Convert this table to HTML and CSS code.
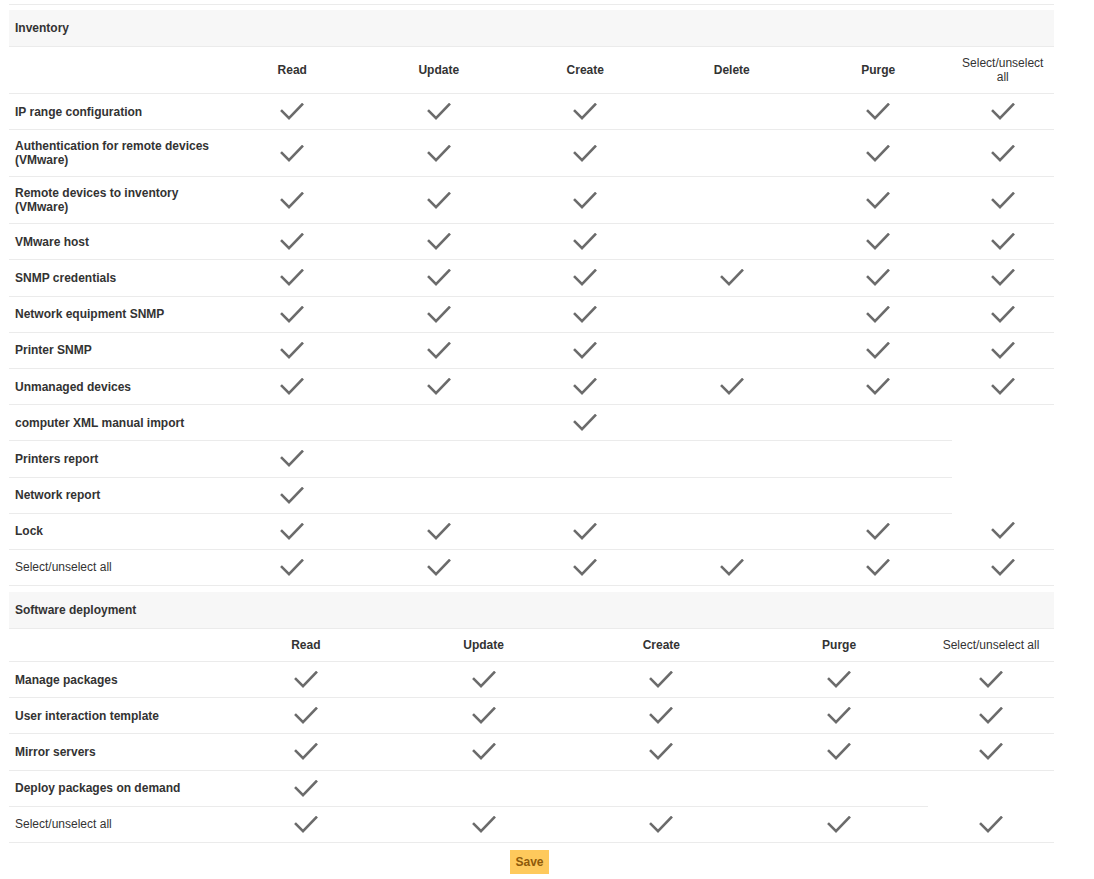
FILE: index.html
```html
<!DOCTYPE html>
<html>
<head>
<meta charset="utf-8">
<link rel="stylesheet" href="styles.css">
</head>
<body>
<div class="page">
  <div class="prev-end"></div>

  <table class="rights inv">
    <colgroup>
      <col class="c-label-inv"><col class="c-inv"><col class="c-inv"><col class="c-inv"><col class="c-inv"><col class="c-inv"><col>
    </colgroup>
    <tr class="section"><th colspan="7">Inventory</th></tr>
    <tr class="heads">
      <th></th><th>Read</th><th>Update</th><th>Create</th><th>Delete</th><th>Purge</th><th class="all">Select/unselect all</th>
    </tr>
    <tr><td class="label">IP range configuration</td><td class="ck"><svg class="check" viewBox="0 0 24 17"><polyline points="1,7 9,15 23,0.5"/></svg></td><td class="ck"><svg class="check" viewBox="0 0 24 17"><polyline points="1,7 9,15 23,0.5"/></svg></td><td class="ck"><svg class="check" viewBox="0 0 24 17"><polyline points="1,7 9,15 23,0.5"/></svg></td><td class="ck"></td><td class="ck"><svg class="check" viewBox="0 0 24 17"><polyline points="1,7 9,15 23,0.5"/></svg></td><td class="ck"><svg class="check" viewBox="0 0 24 17"><polyline points="1,7 9,15 23,0.5"/></svg></td></tr>
    <tr><td class="label">Authentication for remote devices (VMware)</td><td class="ck"><svg class="check" viewBox="0 0 24 17"><polyline points="1,7 9,15 23,0.5"/></svg></td><td class="ck"><svg class="check" viewBox="0 0 24 17"><polyline points="1,7 9,15 23,0.5"/></svg></td><td class="ck"><svg class="check" viewBox="0 0 24 17"><polyline points="1,7 9,15 23,0.5"/></svg></td><td class="ck"></td><td class="ck"><svg class="check" viewBox="0 0 24 17"><polyline points="1,7 9,15 23,0.5"/></svg></td><td class="ck"><svg class="check" viewBox="0 0 24 17"><polyline points="1,7 9,15 23,0.5"/></svg></td></tr>
    <tr><td class="label">Remote devices to inventory (VMware)</td><td class="ck"><svg class="check" viewBox="0 0 24 17"><polyline points="1,7 9,15 23,0.5"/></svg></td><td class="ck"><svg class="check" viewBox="0 0 24 17"><polyline points="1,7 9,15 23,0.5"/></svg></td><td class="ck"><svg class="check" viewBox="0 0 24 17"><polyline points="1,7 9,15 23,0.5"/></svg></td><td class="ck"></td><td class="ck"><svg class="check" viewBox="0 0 24 17"><polyline points="1,7 9,15 23,0.5"/></svg></td><td class="ck"><svg class="check" viewBox="0 0 24 17"><polyline points="1,7 9,15 23,0.5"/></svg></td></tr>
    <tr><td class="label">VMware host</td><td class="ck"><svg class="check" viewBox="0 0 24 17"><polyline points="1,7 9,15 23,0.5"/></svg></td><td class="ck"><svg class="check" viewBox="0 0 24 17"><polyline points="1,7 9,15 23,0.5"/></svg></td><td class="ck"><svg class="check" viewBox="0 0 24 17"><polyline points="1,7 9,15 23,0.5"/></svg></td><td class="ck"></td><td class="ck"><svg class="check" viewBox="0 0 24 17"><polyline points="1,7 9,15 23,0.5"/></svg></td><td class="ck"><svg class="check" viewBox="0 0 24 17"><polyline points="1,7 9,15 23,0.5"/></svg></td></tr>
    <tr><td class="label">SNMP credentials</td><td class="ck"><svg class="check" viewBox="0 0 24 17"><polyline points="1,7 9,15 23,0.5"/></svg></td><td class="ck"><svg class="check" viewBox="0 0 24 17"><polyline points="1,7 9,15 23,0.5"/></svg></td><td class="ck"><svg class="check" viewBox="0 0 24 17"><polyline points="1,7 9,15 23,0.5"/></svg></td><td class="ck"><svg class="check" viewBox="0 0 24 17"><polyline points="1,7 9,15 23,0.5"/></svg></td><td class="ck"><svg class="check" viewBox="0 0 24 17"><polyline points="1,7 9,15 23,0.5"/></svg></td><td class="ck"><svg class="check" viewBox="0 0 24 17"><polyline points="1,7 9,15 23,0.5"/></svg></td></tr>
    <tr><td class="label">Network equipment SNMP</td><td class="ck"><svg class="check" viewBox="0 0 24 17"><polyline points="1,7 9,15 23,0.5"/></svg></td><td class="ck"><svg class="check" viewBox="0 0 24 17"><polyline points="1,7 9,15 23,0.5"/></svg></td><td class="ck"><svg class="check" viewBox="0 0 24 17"><polyline points="1,7 9,15 23,0.5"/></svg></td><td class="ck"></td><td class="ck"><svg class="check" viewBox="0 0 24 17"><polyline points="1,7 9,15 23,0.5"/></svg></td><td class="ck"><svg class="check" viewBox="0 0 24 17"><polyline points="1,7 9,15 23,0.5"/></svg></td></tr>
    <tr><td class="label">Printer SNMP</td><td class="ck"><svg class="check" viewBox="0 0 24 17"><polyline points="1,7 9,15 23,0.5"/></svg></td><td class="ck"><svg class="check" viewBox="0 0 24 17"><polyline points="1,7 9,15 23,0.5"/></svg></td><td class="ck"><svg class="check" viewBox="0 0 24 17"><polyline points="1,7 9,15 23,0.5"/></svg></td><td class="ck"></td><td class="ck"><svg class="check" viewBox="0 0 24 17"><polyline points="1,7 9,15 23,0.5"/></svg></td><td class="ck"><svg class="check" viewBox="0 0 24 17"><polyline points="1,7 9,15 23,0.5"/></svg></td></tr>
    <tr><td class="label">Unmanaged devices</td><td class="ck"><svg class="check" viewBox="0 0 24 17"><polyline points="1,7 9,15 23,0.5"/></svg></td><td class="ck"><svg class="check" viewBox="0 0 24 17"><polyline points="1,7 9,15 23,0.5"/></svg></td><td class="ck"><svg class="check" viewBox="0 0 24 17"><polyline points="1,7 9,15 23,0.5"/></svg></td><td class="ck"><svg class="check" viewBox="0 0 24 17"><polyline points="1,7 9,15 23,0.5"/></svg></td><td class="ck"><svg class="check" viewBox="0 0 24 17"><polyline points="1,7 9,15 23,0.5"/></svg></td><td class="ck"><svg class="check" viewBox="0 0 24 17"><polyline points="1,7 9,15 23,0.5"/></svg></td></tr>
    <tr><td class="label">computer XML manual import</td><td class="ck"></td><td class="ck"></td><td class="ck"><svg class="check" viewBox="0 0 24 17"><polyline points="1,7 9,15 23,0.5"/></svg></td><td class="ck"></td><td class="ck"></td></tr>
    <tr><td class="label">Printers report</td><td class="ck"><svg class="check" viewBox="0 0 24 17"><polyline points="1,7 9,15 23,0.5"/></svg></td><td class="ck"></td><td class="ck"></td><td class="ck"></td><td class="ck"></td></tr>
    <tr><td class="label">Network report</td><td class="ck"><svg class="check" viewBox="0 0 24 17"><polyline points="1,7 9,15 23,0.5"/></svg></td><td class="ck"></td><td class="ck"></td><td class="ck"></td><td class="ck"></td></tr>
    <tr><td class="label">Lock</td><td class="ck"><svg class="check" viewBox="0 0 24 17"><polyline points="1,7 9,15 23,0.5"/></svg></td><td class="ck"><svg class="check" viewBox="0 0 24 17"><polyline points="1,7 9,15 23,0.5"/></svg></td><td class="ck"><svg class="check" viewBox="0 0 24 17"><polyline points="1,7 9,15 23,0.5"/></svg></td><td class="ck"></td><td class="ck"><svg class="check" viewBox="0 0 24 17"><polyline points="1,7 9,15 23,0.5"/></svg></td><td class="ck"><svg class="check" viewBox="0 0 24 17"><polyline points="1,7 9,15 23,0.5"/></svg></td></tr>
    <tr><td class="label normal">Select/unselect all</td><td class="ck"><svg class="check" viewBox="0 0 24 17"><polyline points="1,7 9,15 23,0.5"/></svg></td><td class="ck"><svg class="check" viewBox="0 0 24 17"><polyline points="1,7 9,15 23,0.5"/></svg></td><td class="ck"><svg class="check" viewBox="0 0 24 17"><polyline points="1,7 9,15 23,0.5"/></svg></td><td class="ck"><svg class="check" viewBox="0 0 24 17"><polyline points="1,7 9,15 23,0.5"/></svg></td><td class="ck"><svg class="check" viewBox="0 0 24 17"><polyline points="1,7 9,15 23,0.5"/></svg></td><td class="ck"><svg class="check" viewBox="0 0 24 17"><polyline points="1,7 9,15 23,0.5"/></svg></td></tr>
  </table>

  <table class="rights soft">
    <colgroup>
      <col class="c-label-soft"><col class="c-soft"><col class="c-soft"><col class="c-soft"><col class="c-soft"><col>
    </colgroup>
    <tr class="section"><th colspan="6">Software deployment</th></tr>
    <tr class="heads">
      <th></th><th>Read</th><th>Update</th><th>Create</th><th>Purge</th><th class="all">Select/unselect all</th>
    </tr>
    <tr><td class="label">Manage packages</td><td class="ck"><svg class="check" viewBox="0 0 24 17"><polyline points="1,7 9,15 23,0.5"/></svg></td><td class="ck"><svg class="check" viewBox="0 0 24 17"><polyline points="1,7 9,15 23,0.5"/></svg></td><td class="ck"><svg class="check" viewBox="0 0 24 17"><polyline points="1,7 9,15 23,0.5"/></svg></td><td class="ck"><svg class="check" viewBox="0 0 24 17"><polyline points="1,7 9,15 23,0.5"/></svg></td><td class="ck"><svg class="check" viewBox="0 0 24 17"><polyline points="1,7 9,15 23,0.5"/></svg></td></tr>
    <tr><td class="label">User interaction template</td><td class="ck"><svg class="check" viewBox="0 0 24 17"><polyline points="1,7 9,15 23,0.5"/></svg></td><td class="ck"><svg class="check" viewBox="0 0 24 17"><polyline points="1,7 9,15 23,0.5"/></svg></td><td class="ck"><svg class="check" viewBox="0 0 24 17"><polyline points="1,7 9,15 23,0.5"/></svg></td><td class="ck"><svg class="check" viewBox="0 0 24 17"><polyline points="1,7 9,15 23,0.5"/></svg></td><td class="ck"><svg class="check" viewBox="0 0 24 17"><polyline points="1,7 9,15 23,0.5"/></svg></td></tr>
    <tr><td class="label">Mirror servers</td><td class="ck"><svg class="check" viewBox="0 0 24 17"><polyline points="1,7 9,15 23,0.5"/></svg></td><td class="ck"><svg class="check" viewBox="0 0 24 17"><polyline points="1,7 9,15 23,0.5"/></svg></td><td class="ck"><svg class="check" viewBox="0 0 24 17"><polyline points="1,7 9,15 23,0.5"/></svg></td><td class="ck"><svg class="check" viewBox="0 0 24 17"><polyline points="1,7 9,15 23,0.5"/></svg></td><td class="ck"><svg class="check" viewBox="0 0 24 17"><polyline points="1,7 9,15 23,0.5"/></svg></td></tr>
    <tr><td class="label">Deploy packages on demand</td><td class="ck"><svg class="check" viewBox="0 0 24 17"><polyline points="1,7 9,15 23,0.5"/></svg></td><td class="ck"></td><td class="ck"></td><td class="ck"></td></tr>
    <tr><td class="label normal">Select/unselect all</td><td class="ck"><svg class="check" viewBox="0 0 24 17"><polyline points="1,7 9,15 23,0.5"/></svg></td><td class="ck"><svg class="check" viewBox="0 0 24 17"><polyline points="1,7 9,15 23,0.5"/></svg></td><td class="ck"><svg class="check" viewBox="0 0 24 17"><polyline points="1,7 9,15 23,0.5"/></svg></td><td class="ck"><svg class="check" viewBox="0 0 24 17"><polyline points="1,7 9,15 23,0.5"/></svg></td><td class="ck"><svg class="check" viewBox="0 0 24 17"><polyline points="1,7 9,15 23,0.5"/></svg></td></tr>
  </table>

  <div class="actions"><button class="save" type="button">Save</button></div>
</div>
</body>
</html>
```

FILE: styles.css
```css
html, body {
  margin: 0;
  padding: 0;
  background: #ffffff;
}

body {
  font-family: "Liberation Sans", Arial, sans-serif;
  font-size: 12px;
  color: #333333;
}

.page {
  width: 1045px;
  padding-left: 9px;
}

.prev-end {
  height: 4px;
  border-bottom: 1px solid #ebebeb;
}

.rights {
  width: 1045px;
  table-layout: fixed;
  border-collapse: collapse;
  border-spacing: 0;
}

.inv {
  margin-top: 5px;
}

.soft {
  margin-top: 6px;
}

.c-label-inv { width: 210px; }
.c-inv { width: 146.5px; }
.c-label-soft { width: 208px; }
.c-soft { width: 177.75px; }

.rights th,
.rights td {
  padding: 9px 6px;
  line-height: 14px;
  border-bottom: 1px solid #ebebeb;
  vertical-align: middle;
}

.section th {
  background: #f7f7f7;
  text-align: left;
  font-weight: bold;
  padding: 11px 6px;
}

.heads th {
  text-align: center;
  font-weight: bold;
}

.heads th.all {
  font-weight: normal;
  padding-left: 8px;
  padding-right: 8px;
}

.label {
  font-weight: bold;
  text-align: left;
}

.label.normal {
  font-weight: normal;
}

.ck {
  text-align: center;
}

.check {
  display: block;
  width: 24px;
  height: 17.2px;
  margin: 0 auto;
}

.check polyline {
  fill: none;
  stroke: #6b6b6b;
  stroke-width: 2.6;
  stroke-linecap: butt;
  stroke-linejoin: miter;
}

.actions {
  display: flex;
  justify-content: center;
  padding-top: 7px;
  padding-right: 4px;
}

.save {
  height: 24px;
  padding: 0 5px;
  border: none;
  background: #fec95c;
  color: #8f5a0a;
  font-family: "Liberation Sans", Arial, sans-serif;
  font-size: 12px;
  font-weight: bold;
  cursor: pointer;
}
```
